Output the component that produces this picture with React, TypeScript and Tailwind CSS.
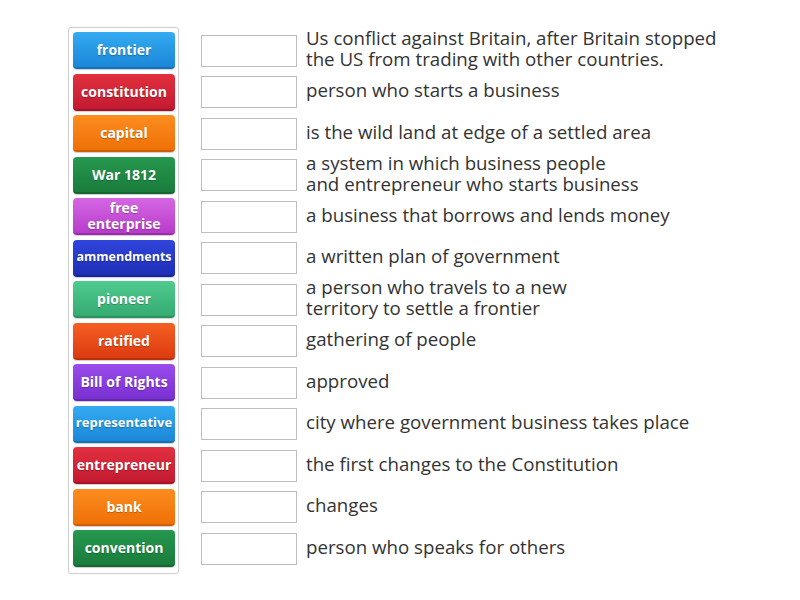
import React from "react";

type Tile = { label: React.ReactNode; cls: string; size: string };

const tiles: Tile[] = [
  { label: "frontier", cls: "bg-gradient-to-b from-[#34abf2] to-[#1a87d7] border-b-[#1670b8]", size: "text-[14px]" },
  { label: "constitution", cls: "bg-gradient-to-b from-[#e2303f] to-[#c31a31] border-b-[#a3142a]", size: "text-[14px]" },
  { label: "capital", cls: "bg-gradient-to-b from-[#fc8d1e] to-[#ef7006] border-b-[#cf5f04]", size: "text-[14px]" },
  { label: "War 1812", cls: "bg-gradient-to-b from-[#26984f] to-[#1a7c3c] border-b-[#156632]", size: "text-[14px]" },
  { label: <>free<br />enterprise</>, cls: "bg-gradient-to-b from-[#d566e3] to-[#b83bcb] border-b-[#9a2cab]", size: "text-[14px] leading-[16px]" },
  { label: "ammendments", cls: "bg-gradient-to-b from-[#3045dc] to-[#1e2eb5] border-b-[#18259a]", size: "text-[12.5px]" },
  { label: "pioneer", cls: "bg-gradient-to-b from-[#4fcb8f] to-[#35ab71] border-b-[#2b915f]", size: "text-[14px]" },
  { label: "ratified", cls: "bg-gradient-to-b from-[#f65f22] to-[#dc3a10] border-b-[#bb2f0c]", size: "text-[14px]" },
  { label: "Bill of Rights", cls: "bg-gradient-to-b from-[#9a4cec] to-[#7a2fd2] border-b-[#6526b2]", size: "text-[14px]" },
  { label: "representative", cls: "bg-gradient-to-b from-[#34abf2] to-[#1a87d7] border-b-[#1670b8]", size: "text-[13px]" },
  { label: "entrepreneur", cls: "bg-gradient-to-b from-[#e2303f] to-[#c31a31] border-b-[#a3142a]", size: "text-[14px]" },
  { label: "bank", cls: "bg-gradient-to-b from-[#fc8d1e] to-[#ef7006] border-b-[#cf5f04]", size: "text-[14px]" },
  { label: "convention", cls: "bg-gradient-to-b from-[#26984f] to-[#1a7c3c] border-b-[#156632]", size: "text-[14px]" },
];

const defs: React.ReactNode[] = [
  <>Us conflict against Britain, after Britain stopped<br />the US from trading with other countries.</>,
  "person who starts a business",
  "is the wild land at edge of a settled area",
  <>a system in which business people<br />and entrepreneur who starts business</>,
  "a business that borrows and lends money",
  "a written plan of government",
  <>a person who travels to a new<br />territory to settle a frontier</>,
  "gathering of people",
  "approved",
  "city where government business takes place",
  "the first changes to the Constitution",
  "changes",
  "person who speaks for others",
];

export default function App() {
  return (
    <div
      className="w-[800px] h-[600px] bg-white relative"
      style={{ fontFamily: '"Open Sans", "Noto Sans", sans-serif' }}
    >
      <div className="flex items-start pt-[27px] pl-[68px]">
        <div className="w-[111px] border border-[#cfcfcf] rounded-[3px] px-[4px] pt-[4px] pb-[6px] flex flex-col gap-[4.5px] shadow-[0_0_2px_rgba(0,0,0,0.08)]">
          {tiles.map((t, i) => (
            <div
              key={i}
              className={`h-[37px] w-[102px] rounded-[4px] border-b-2 flex items-center justify-center text-center text-white font-bold ${t.size} ${t.cls} [text-shadow:0_1px_1px_rgba(0,0,0,0.25)] shadow-[0_1px_1px_rgba(0,0,0,0.2)]`}
            >
              <span className="whitespace-nowrap">{t.label}</span>
            </div>
          ))}
        </div>
        <div className="ml-[22px] mt-[5px] flex flex-col gap-[4.5px]">
          {defs.map((d, i) => (
            <div key={i} className="h-[37px] flex items-center">
              <div className="w-[96px] h-[32px] border border-[#bdbdbd] bg-white shrink-0" />
              <div className="ml-[9px] pb-[5px] text-[18.7px] leading-[21px] text-[#333333] whitespace-nowrap">
                {d}
              </div>
            </div>
          ))}
        </div>
      </div>
    </div>
  );
}
